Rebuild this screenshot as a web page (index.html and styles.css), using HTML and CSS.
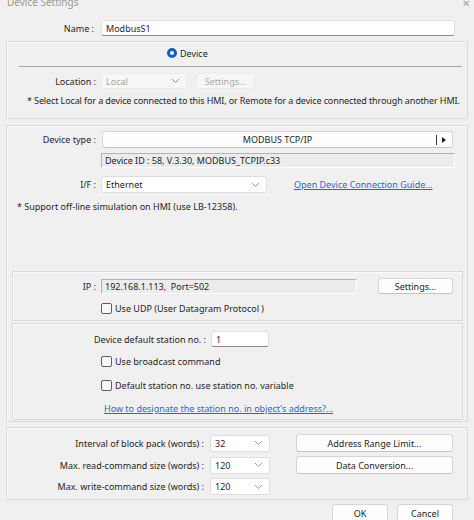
FILE: index.html
```html
<!DOCTYPE html>
<html lang="en">
<head>
  <meta charset="UTF-8" />
  <title>Device Settings</title>
  <link rel="stylesheet" href="styles.css">
</head>
<body>
  <div class="dialog">
    <div class="titlebar">
      <span class="title">Device Settings</span>
      <span class="close">&#x2715;</span>
    </div>

    <div class="row name-row">
      <span class="lbl lbl-name">Name :</span>
      <span class="field name-field">ModbusS1</span>
    </div>

    <!-- location -->
    <section class="group g-location">
      <div class="radio-row"><span class="radio"></span>Device</div>
      <div class="rule"></div>
      <div class="row loc-row">
        <span class="lbl lbl-loc">Location :</span>
        <span class="combo disabled loc-combo">Local
          <svg class="chev" width="9" height="6" viewBox="0 0 9 6"><polyline points="1,1 4.5,4.5 8,1" /></svg>
        </span>
        <span class="btn disabled loc-btn">Settings...</span>
      </div>
      <p class="note note-loc">* Select Local for a device connected to this HMI, or Remote for a device connected through another HMI.</p>
    </section>

    <!-- device / interface -->
    <section class="group g-device">
      <div class="row">
        <span class="lbl lbl-dev">Device type :</span>
        <span class="btn type-btn">
          <span class="type-name">MODBUS TCP/IP</span>
          <span class="type-sep"></span>
          <span class="type-arrow"></span>
        </span>
      </div>
      <div class="row id-row">
        <span class="lbl lbl-dev"></span>
        <span class="readonly id-field">Device ID : 58, V.3.30, MODBUS_TCPIP.c33</span>
      </div>
      <div class="row if-row">
        <span class="lbl lbl-dev">I/F :</span>
        <span class="combo if-combo">Ethernet
          <svg class="chev" width="9" height="6" viewBox="0 0 9 6"><polyline points="1,1 4.5,4.5 8,1" /></svg>
        </span>
        <a class="link guide-link" href="#">Open Device Connection Guide...</a>
      </div>
      <p class="note note-sim">* Support off-line simulation on HMI (use LB-12358).</p>

      <section class="subgroup g-ip">
        <div class="row">
          <span class="lbl lbl-ip">IP :</span>
          <span class="readonly ip-field">192.168.1.113,&nbsp; Port=502</span>
          <span class="btn ip-btn">Settings...</span>
        </div>
        <label class="check-row udp-row"><span class="check"></span>Use UDP (User Datagram Protocol )</label>
      </section>

      <section class="subgroup g-station">
        <div class="row">
          <span class="lbl lbl-station">Device default station no. :</span>
          <span class="field station-field">1</span>
        </div>
        <label class="check-row bc-row"><span class="check"></span>Use broadcast command</label>
        <label class="check-row var-row"><span class="check"></span>Default station no. use station no. variable</label>
        <a class="link station-link" href="#">How to designate the station no. in object's address?...</a>
      </section>
    </section>

    <!-- block sizes -->
    <section class="group g-block">
      <div class="block-grid">
        <span class="lbl">Interval of block pack (words) :</span>
        <span class="combo size-combo">32
          <svg class="chev" width="9" height="6" viewBox="0 0 9 6"><polyline points="1,1 4.5,4.5 8,1" /></svg>
        </span>
        <span class="btn side-btn">Address Range Limit...</span>

        <span class="lbl">Max. read-command size (words) :</span>
        <span class="combo size-combo">120
          <svg class="chev" width="9" height="6" viewBox="0 0 9 6"><polyline points="1,1 4.5,4.5 8,1" /></svg>
        </span>
        <span class="btn side-btn">Data Conversion...</span>

        <span class="lbl">Max. write-command size (words) :</span>
        <span class="combo size-combo">120
          <svg class="chev" width="9" height="6" viewBox="0 0 9 6"><polyline points="1,1 4.5,4.5 8,1" /></svg>
        </span>
        <span></span>
      </div>
    </section>

    <div class="footer">
      <span class="btn foot-btn">OK</span>
      <span class="btn foot-btn">Cancel</span>
    </div>
  </div>
</body>
</html>
```

FILE: styles.css
```css
* {
  box-sizing: border-box;
}

body {
  margin: 0;
  font-family: 'Noto Sans', sans-serif;
  font-size: 9px;
  color: #1f1f1f;
  background: #f0f0f0;
}

.dialog {
  width: 474px;
  height: 520px;
  overflow: hidden;
  background: #f0f0f0;
}

.titlebar {
  height: 20px;
  display: flex;
  justify-content: space-between;
  padding: 0 4px 0 7px;
}

.title {
  margin-top: -5px;
  font-size: 10px;
  line-height: 14px;
  color: #9a9a9a;
}

.close {
  margin-top: -4px;
  font-size: 10px;
  color: #a0a0a0;
}

.row {
  display: flex;
  align-items: center;
}

.lbl {
  flex: none;
  text-align: right;
  padding-right: 5px;
  white-space: nowrap;
}

/* inputs and buttons */
.field, .combo, .btn, .readonly {
  flex: none;
  display: flex;
  align-items: center;
  white-space: nowrap;
}

.field {
  height: 16px;
  padding-left: 4px;
  background: #ffffff;
  border: 1px solid #e2e2e2;
  border-bottom-color: #8a8a8a;
  border-radius: 3px;
}

.combo {
  height: 17px;
  padding: 0 6px 0 4px;
  justify-content: space-between;
  background: #ffffff;
  border: 1px solid #dedede;
  border-radius: 3px;
}

.combo.disabled {
  background: #f7f7f7;
  color: #a3a3a3;
  border-color: #ececec;
}

.chev {
  fill: none;
  stroke: #9a9a9a;
  stroke-width: 1;
}

.btn {
  height: 17px;
  justify-content: center;
  background: #fdfdfd;
  border: 1px solid #d6d6d6;
  border-bottom-color: #c2c2c2;
  border-radius: 3px;
}

.btn.disabled {
  background: #f6f6f6;
  color: #a8a8a8;
  border-color: #ececec;
}

.readonly {
  height: 15px;
  padding-left: 3px;
  background: #ececec;
  border-top: 1px solid #b4b4b4;
  border-left: 1px solid #b4b4b4;
  border-right: 1px solid #ffffff;
  border-bottom: 1px solid #ffffff;
}

.link {
  color: #2f67c8;
  text-decoration: underline;
}

.note {
  margin: 0;
  line-height: 14px;
  white-space: nowrap;
}

.name-row {
  height: 16px;
}

.lbl-name {
  width: 101px;
  padding-right: 7px;
}

.name-field {
  width: 354px;
}

/* group boxes */
.group {
  margin: 0 6px;
  border: 1px solid #dadada;
  box-shadow: inset 1px 1px 0 #fafafa;
}

.subgroup {
  margin: 0 4px 0 5px;
  border: 1px solid #dadada;
  box-shadow: inset 1px 1px 0 #fafafa;
}

.g-location {
  margin-top: 5px;
  padding: 1px 0 10px;
}

.radio-row {
  height: 20px;
  display: flex;
  align-items: center;
  padding-left: 160px;
}

.radio {
  width: 10px;
  height: 10px;
  margin-right: 3px;
  border-radius: 50%;
  background: #ffffff;
  border: 3px solid #0f5fc2;
}

.rule {
  height: 1px;
  margin: 3px 5px 0 12px;
  background: #a7a7a7;
}

.loc-row {
  margin-top: 6px;
}

.lbl-loc {
  width: 94px;
}

.loc-combo {
  width: 86px;
  height: 16px;
}

.loc-btn {
  width: 59px;
  height: 16px;
  margin-left: 9px;
}

.note-loc {
  margin-top: 5px;
  padding-left: 20px;
  letter-spacing: -0.12px;
}

.g-device {
  margin-top: 6px;
  padding: 5px 0 1px;
}

.lbl-dev {
  width: 94px;
}

.type-btn {
  width: 351px;
  margin-left: 1px;
  position: relative;
}

.type-sep {
  position: absolute;
  right: 15px;
  top: 3px;
  width: 1px;
  height: 10px;
  background: #333333;
}

.type-arrow {
  position: absolute;
  right: 6px;
  top: 5px;
  border-left: 4px solid #222222;
  border-top: 3px solid transparent;
  border-bottom: 3px solid transparent;
}

.id-row {
  margin-top: 5px;
}

.id-field {
  width: 354px;
}

.if-row {
  margin-top: 8px;
}

.if-combo {
  width: 166px;
}

.guide-link {
  margin-left: 27px;
}

.note-sim {
  margin-top: 7px;
  padding-left: 10px;
}

.g-ip {
  margin-top: 57px;
  padding: 6px 0 5px;
}

.lbl-ip {
  width: 88px;
}

.ip-field {
  width: 256px;
}

.ip-btn {
  width: 75px;
  height: 16px;
  margin-left: 21px;
}

.check-row {
  display: flex;
  align-items: center;
  height: 14px;
  padding-left: 88px;
}

.check {
  width: 11px;
  height: 11px;
  margin-right: 3px;
  border: 1px solid #5e5e5e;
  border-radius: 2px;
  background: #f8f8f8;
}

.udp-row {
  margin-top: 7px;
}

.g-station {
  margin-top: 2px;
  padding: 7px 0 3px;
}

.lbl-station {
  width: 198px;
}

.station-field {
  width: 58px;
}

.bc-row {
  margin-top: 7px;
}

.var-row {
  margin-top: 10px;
}

.station-link {
  display: block;
  margin-top: 10px;
  padding-left: 91px;
  line-height: 14px;
}

.g-block {
  margin-top: 5px;
  padding: 6px 0 4px;
}

.block-grid {
  display: grid;
  grid-template-columns: 203px 60px 183px;
  row-gap: 4px;
  align-items: center;
}

.block-grid .lbl {
  padding-right: 6px;
}

.size-combo {
  height: 17px;
}

.side-btn {
  height: 18px;
  margin-left: 26px;
}

.footer {
  display: flex;
  justify-content: flex-end;
  gap: 9px;
  margin-top: 4px;
  padding-right: 21px;
}

.foot-btn {
  width: 56px;
  height: 19px;
}
```
